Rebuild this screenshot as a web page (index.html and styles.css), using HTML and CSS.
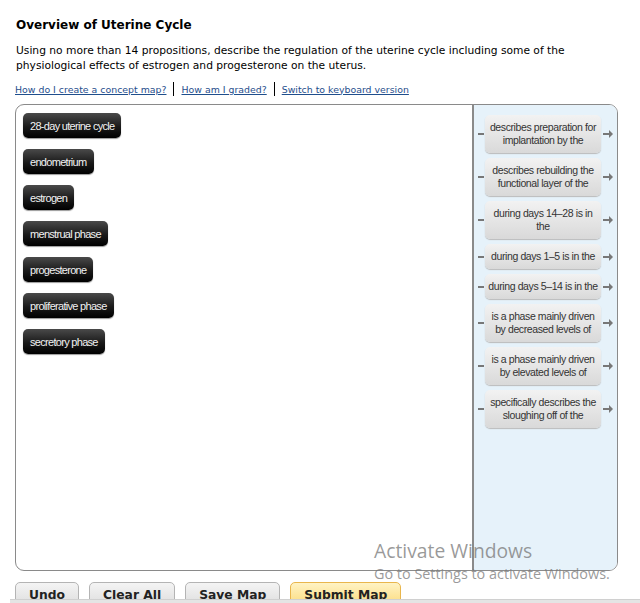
FILE: index.html
```html
<!DOCTYPE html>
<html lang="en">
<head>
  <meta charset="UTF-8"/>
  <title>Overview of Uterine Cycle</title>
  <link rel="stylesheet" href="styles.css">
</head>
<body>
  <div class="page">
    <h1>Overview of Uterine Cycle</h1>
    <p class="prompt">Using no more than 14 propositions, describe the regulation of the uterine cycle including some of the physiological effects of estrogen and progesterone on the uterus.</p>
    <div class="help">
      <a href="#">How do I create a concept map?</a>
      <span class="sep"></span>
      <a href="#">How am I graded?</a>
      <span class="sep"></span>
      <a href="#">Switch to keyboard version</a>
    </div>

    <!-- concept map workspace -->
    <div class="map">
      <div class="concepts">
        <div class="concept">28-day uterine cycle</div>
        <div class="concept">endometrium</div>
        <div class="concept">estrogen</div>
        <div class="concept">menstrual phase</div>
        <div class="concept">progesterone</div>
        <div class="concept">proliferative phase</div>
        <div class="concept">secretory phase</div>
      </div>
      <div class="links">
        <div class="link"><span class="tail"></span><div class="phrase">describes preparation for implantation by the</div><span class="head"></span></div>
        <div class="link"><span class="tail"></span><div class="phrase">describes rebuilding the functional layer of the</div><span class="head"></span></div>
        <div class="link"><span class="tail"></span><div class="phrase">during days 14–28 is in the</div><span class="head"></span></div>
        <div class="link"><span class="tail"></span><div class="phrase">during days 1–5 is in the</div><span class="head"></span></div>
        <div class="link"><span class="tail"></span><div class="phrase">during days 5–14 is in the</div><span class="head"></span></div>
        <div class="link"><span class="tail"></span><div class="phrase">is a phase mainly driven by decreased levels of</div><span class="head"></span></div>
        <div class="link"><span class="tail"></span><div class="phrase">is a phase mainly driven by elevated levels of</div><span class="head"></span></div>
        <div class="link"><span class="tail"></span><div class="phrase">specifically describes the sloughing off of the</div><span class="head"></span></div>
      </div>
    </div>

    <div class="actions">
      <button>Undo</button>
      <button>Clear All</button>
      <button>Save Map</button>
      <button class="submit">Submit Map</button>
    </div>
  </div>

  <div class="watermark">
    <div class="wm-title">Activate Windows</div>
    <div class="wm-sub">Go to Settings to activate Windows.</div>
  </div>
  <div class="bottombar"></div>
</body>
</html>
```
FILE: styles.css
```css
body { margin: 0; background: #fff; color: #000; font-family: Verdana, "DejaVu Sans", sans-serif; overflow: hidden; }
.page { padding: 17px 0 0 15px; width: 603px; }
h1 { margin: 0 0 9px 1px; font-size: 12px; font-weight: bold; line-height: 17px; }
.prompt { margin: 0 0 8px 1px; font-size: 10.7px; line-height: 15px; width: 570px; }
.help { display: flex; align-items: center; font-size: 9.4px; margin: 0 0 7px 0; height: 16px; }
.help a { color: #1f4e8c; text-decoration: underline; }
.sep { width: 1px; height: 14px; background: #000; margin: 0 7px; }

.map {
  display: flex; height: 465px;
  border: 1px solid #8a8a8a; border-radius: 9px; overflow: hidden;
}
.concepts { flex: 1; display: flex; flex-direction: column; align-items: flex-start; gap: 11px; padding: 8px 0 0 7px; }
.concept {
  height: 25px; box-sizing: border-box; padding: 0 7px;
  display: flex; align-items: center;
  background: linear-gradient(#4a4a4a, #1a1a1a 55%, #000);
  border-radius: 5px; box-shadow: 0 1px 1px #999;
  color: #f2f2f2; font-family: "Liberation Sans", Arial, sans-serif; font-size: 11px; letter-spacing: -0.7px;
}
.links {
  width: 143px; background: #e6f2fa; border-left: 2px solid #8a8a8a;
  display: flex; flex-direction: column; gap: 5px; padding-top: 10px;
}
.link { display: flex; align-items: center; }
.tail { width: 6px; height: 2px; background: #777; margin: 0 1px 0 4px; }
.phrase {
  width: 116px; box-sizing: border-box; padding: 6px 1px; min-height: 24px;
  display: flex; align-items: center; justify-content: center; text-align: center;
  background: linear-gradient(#f2f2f2, #d9d9d9);
  border-radius: 5px; box-shadow: 0 1px 1px #bbb;
  color: #333; font-family: "Liberation Sans", Arial, sans-serif; font-size: 10.5px; line-height: 13px; letter-spacing: -0.4px;
}
.head { position: relative; width: 8px; height: 2px; background: #777; margin-left: 2px; }
.head::after {
  content: ""; position: absolute; right: -2px; top: -3px;
  border-left: 4px solid #777; border-top: 4px solid transparent; border-bottom: 4px solid transparent;
}

.actions { display: flex; gap: 10px; margin-top: 11px; }
button {
  height: 26px; padding: 0 13px; box-sizing: border-box;
  background: linear-gradient(#f4f4f4, #dcdcdc);
  border: 1px solid #b4b4b4; border-radius: 5px;
  font-family: Verdana, "DejaVu Sans", sans-serif; font-size: 12.3px; font-weight: bold; color: #222;
}
button.submit { background: linear-gradient(#fff3c4, #fbd978); border-color: #e9b64c; }

.watermark { position: absolute; left: 374px; top: 538px; color: rgba(120,120,120,0.75); font-family: "Open Sans", "DejaVu Sans", sans-serif; pointer-events: none; }
.wm-title { font-size: 19.3px; line-height: 25px; }
.wm-sub { font-size: 14.4px; line-height: 18px; margin-top: 2px; }
.bottombar { position: absolute; left: 10px; right: 0; top: 599px; height: 4px; background: #e4e4e4; border-top: 1px solid #d0d0d0; }
```
